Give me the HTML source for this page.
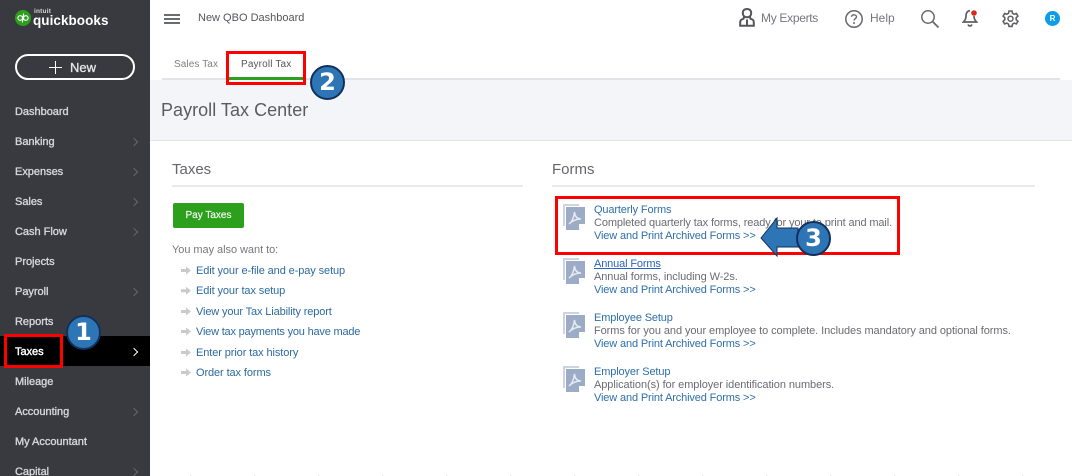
<!DOCTYPE html>
<html><head><meta charset="utf-8"><style>
html,body{margin:0;padding:0;background:#fff}
#p{position:relative;width:1072px;height:476px;overflow:hidden;background:#fff;font-family:"Liberation Sans",sans-serif;font-size:11px;color:#6b6c72}
#p div,#p a,#p svg{position:absolute;white-space:nowrap}
.s{left:15px;color:#d4d7dc;font-size:11px;line-height:14px;letter-spacing:-.02px;-webkit-text-stroke:.35px #d4d7dc}
.c{left:131px;width:5px;height:5px;border-top:1px solid #66676c;border-right:1px solid #66676c;transform:rotate(45deg)}
.l{color:#2d6a9f;font-size:11px;line-height:13px;left:196px;letter-spacing:-.1px}
.t{color:#6b6c72;font-size:11px;line-height:13px;left:594px;letter-spacing:-.075px}
.b{color:#2f6fa8;font-size:11px;line-height:13px;left:594px;letter-spacing:-.14px}
.n{border-radius:50%;background:#2e75b6;border:2px solid #12305c;width:31px;height:31px;color:#fff;font-family:"DejaVu Sans",sans-serif;font-weight:bold;font-size:24px;line-height:31px;text-align:center}
.r{border:3px solid #f00;box-sizing:border-box}
.k{top:475px;width:1px;height:1px;background:#ddd}
</style></head><body><div id="p">
<div style="left:0;top:0;width:150px;height:476px;background:#393a3f"></div>
<svg style="left:15px;top:10px" width="16" height="16" viewBox="0 0 16 16"><circle cx="8" cy="8" r="8" fill="#2ca01c"/><circle cx="5.200" cy="8" r="2.300" fill="none" stroke="#fff" stroke-width="1.100"/><path d="M7.500 5.700V12.500M8.500 3.500V10.300" stroke="#fff" stroke-width="1.100" fill="none"/><circle cx="10.800" cy="8" r="2.300" fill="none" stroke="#fff" stroke-width="1.100"/></svg>
<div style="left:34px;top:8px;color:#d8d8d8;font-size:6.500px;line-height:7px;font-weight:bold;letter-spacing:.2px">intuit</div>
<div style="left:33px;top:13px;color:#fff;font-size:13.500px;line-height:16px;font-weight:bold;letter-spacing:.05px">quickbooks</div>
<div style="left:15px;top:54px;width:120px;height:26px;box-sizing:border-box;border:2px solid #fff;border-radius:13px"></div>
<div style="left:49px;top:67px;width:13px;height:1px;background:#fff"></div>
<div style="left:55px;top:61px;width:1px;height:13px;background:#fff"></div>
<div style="left:70px;top:60px;color:#e8e8e8;font-size:13px;line-height:15px;-webkit-text-stroke:.3px #e8e8e8">New</div>
<div class="s" style="top:105px">Dashboard</div>
<div class="s" style="top:135px">Banking</div><div class="c" style="top:139px"></div>
<div class="s" style="top:165px">Expenses</div><div class="c" style="top:169px"></div>
<div class="s" style="top:195px">Sales</div><div class="c" style="top:199px"></div>
<div class="s" style="top:225px">Cash Flow</div><div class="c" style="top:229px"></div>
<div class="s" style="top:255px">Projects</div>
<div class="s" style="top:285px">Payroll</div><div class="c" style="top:289px"></div>
<div class="s" style="top:315px">Reports</div>
<div style="left:0;top:336px;width:150px;height:30px;background:#000"></div>
<div class="s" style="top:345px;color:#fff;-webkit-text-stroke:.4px #fff">Taxes</div><div class="c" style="top:349px;border-color:#fff"></div>
<div class="s" style="top:375px">Mileage</div>
<div class="s" style="top:405px">Accounting</div><div class="c" style="top:409px"></div>
<div class="s" style="top:435px">My Accountant</div>
<div class="s" style="top:465px">Capital</div><div class="c" style="top:469px"></div>
<div class="r" style="left:4px;top:334px;width:59px;height:34px"></div>
<div class="n" style="left:66px;top:315px">1</div>

<div style="left:164px;top:14px;width:16px;height:2px;background:#6b6c72"></div>
<div style="left:164px;top:18px;width:16px;height:2px;background:#6b6c72"></div>
<div style="left:164px;top:22px;width:16px;height:2px;background:#6b6c72"></div>
<div style="left:198px;top:12px;font-size:11px;line-height:13px;color:#55565b">New QBO Dashboard</div>
<svg style="left:739px;top:7px" width="16" height="20" viewBox="0 0 16 20"><path d="M8 2c-2.800 0-4.200 1.700-4.200 4 0 2.200 1.200 4.200 4.200 4.200s4.200-2 4.200-4.200c0-2.300-1.400-4-4.200-4zM5 10 4.500 11.800C2.500 12.300 1.200 13 1.200 15v3.800h13.600V15c0-2-1.300-2.700-3.300-3.200L11 10M8 12.500v6.300" fill="none" stroke="#56575c" stroke-width="2"/></svg>
<div style="left:761px;top:11px;font-size:12px;line-height:15px;color:#75767b;letter-spacing:-.3px">My Experts</div>
<svg style="left:844px;top:9px" width="20" height="20" viewBox="0 0 20 20"><circle cx="10" cy="10" r="8.200" fill="none" stroke="#68696e" stroke-width="1.500"/><path d="M7.500 7.800C7.700 6.400 8.800 5.800 10 5.800c1.400 0 2.500.9 2.500 2.100 0 1.700-2.500 1.800-2.500 3.600" fill="none" stroke="#68696e" stroke-width="1.400"/><circle cx="10" cy="14" r="1" fill="#68696e"/></svg>
<div style="left:870px;top:11px;font-size:12px;line-height:15px;color:#75767b">Help</div>
<svg style="left:920px;top:9px" width="20" height="20" viewBox="0 0 20 20"><circle cx="8" cy="8" r="6.200" fill="none" stroke="#68696e" stroke-width="1.500"/><path d="M12.500 12.500 18.500 18.500" stroke="#68696e" stroke-width="1.800"/></svg>
<svg style="left:962px;top:8px" width="16" height="20" viewBox="0 0 16 20"><path d="M8 2.500C5 3 4 5.500 4 8c0 3-1 4.500-2.500 6h13C13 12.500 12 11 12 8M6 16.500c.5 1 1 1.500 2 1.500s1.500-.5 2-1.500" fill="none" stroke="#5f6065" stroke-width="1.700"/><circle cx="12" cy="5" r="2.800" fill="#d52b1e"/></svg>
<svg style="left:1002px;top:10px" width="17" height="18" viewBox="0 0 17 18"><path d="M7 1h3l.5 2.300 1.700 1 2.200-.8 1.500 2.600L14.200 7.700v2l1.700 1.600-1.500 2.600-2.200-.8-1.700 1-.5 2.300H7l-.5-2.300-1.700-1-2.200.8-1.500-2.600 1.700-1.600v-2L1.100 6.100l1.500-2.600 2.200.8 1.700-1z" fill="none" stroke="#5f6065" stroke-width="1.600"/><circle cx="8.500" cy="8.700" r="2.500" fill="none" stroke="#5f6065" stroke-width="1.500"/></svg>
<div style="left:1045px;top:11px;width:15px;height:15px;border-radius:50%;background:#0d9ce8;color:#fff;font-size:8px;font-weight:bold;line-height:15px;text-align:center">R</div>

<div style="left:150px;top:80px;width:922px;height:61px;background:#f4f5f8;border-bottom:1px solid #e3e4e7;box-sizing:border-box"></div>
<div style="left:162px;top:78px;width:898px;height:2px;background:#e3e4e7"></div>
<div style="left:174px;top:58px;font-size:10px;line-height:13px;color:#808186;letter-spacing:.1px">Sales Tax</div>
<div style="left:241px;top:58px;font-size:10px;line-height:13px;color:#55565b;letter-spacing:.15px">Payroll Tax</div>
<div style="left:229px;top:77px;width:74px;height:3px;background:#2ca01c"></div>
<div class="r" style="left:226px;top:51px;width:80px;height:34px"></div>
<div class="n" style="left:310px;top:65px">2</div>
<div style="left:161px;top:98px;font-size:18px;line-height:24px;color:#5b5c61;letter-spacing:.03px">Payroll Tax Center</div>

<div style="left:172px;top:161px;font-size:15px;line-height:18px;color:#65666b">Taxes</div>
<div style="left:172px;top:185px;width:351px;height:2px;background:#e9eaec"></div>
<div style="left:173px;top:203px;width:71px;height:25px;background:#2ca01c;border-radius:2px;color:#eef7ec;font-size:10px;line-height:25px;text-align:center;-webkit-text-stroke:.2px #eef7ec">Pay Taxes</div>
<div style="left:172px;top:244px;font-size:11px;line-height:13px;color:#77787c;letter-spacing:-.05px">You may also want to:</div>
<svg style="left:181px;top:266px" width="10" height="112" viewBox="0 0 10 112" fill="#c9cacc"><path d="M0 3h5V0.500L10 4.500 5 8.500V6H0z"/><path d="M0 23.300h5v-2.500l5 4-5 4v-2.500H0zM0 44h5v-2.500l5 4-5 4V47H0zM0 64h5v-2.500l5 4-5 4V67H0zM0 85h5v-2.500l5 4-5 4V88H0zM0 105h5v-2.500l5 4-5 4V108H0z"/></svg>
<div class="l" style="top:265px">Edit your e-file and e-pay setup</div>
<div class="l" style="top:285px">Edit your tax setup</div>
<div class="l" style="top:306px;letter-spacing:-.13px">View your Tax Liability report</div>
<div class="l" style="top:326px;letter-spacing:-.2px">View tax payments you have made</div>
<div class="l" style="top:347px">Enter prior tax history</div>
<div class="l" style="top:367px">Order tax forms</div>

<div style="left:552px;top:161px;font-size:15px;line-height:18px;color:#65666b">Forms</div>
<div style="left:552px;top:185px;width:483px;height:2px;background:#e9eaec"></div>

<svg style="left:563px;top:204px" width="22" height="28" viewBox="0 0 22 28"><path d="M0 0h16v2H2v20H0z" fill="#ccd3e1"/><path d="M3 3h19v17l-6 6H3z" fill="#9dacc6"/><path d="M16 26v-6h6z" fill="#fff"/><path d="M6 20c3-2 5-7 5.500-12 .5 5 3 7 6.500 7-4 0-8 1-12 5z" fill="none" stroke="#e6eaf1" stroke-width="1.500"/></svg>
<svg style="left:563px;top:258px" width="22" height="28" viewBox="0 0 22 28"><path d="M0 0h16v2H2v20H0z" fill="#ccd3e1"/><path d="M3 3h19v17l-6 6H3z" fill="#9dacc6"/><path d="M16 26v-6h6z" fill="#fff"/><path d="M6 20c3-2 5-7 5.500-12 .5 5 3 7 6.500 7-4 0-8 1-12 5z" fill="none" stroke="#e6eaf1" stroke-width="1.500"/></svg>
<svg style="left:563px;top:312px" width="22" height="28" viewBox="0 0 22 28"><path d="M0 0h16v2H2v20H0z" fill="#ccd3e1"/><path d="M3 3h19v17l-6 6H3z" fill="#9dacc6"/><path d="M16 26v-6h6z" fill="#fff"/><path d="M6 20c3-2 5-7 5.500-12 .5 5 3 7 6.500 7-4 0-8 1-12 5z" fill="none" stroke="#e6eaf1" stroke-width="1.500"/></svg>
<svg style="left:563px;top:366px" width="22" height="28" viewBox="0 0 22 28"><path d="M0 0h16v2H2v20H0z" fill="#ccd3e1"/><path d="M3 3h19v17l-6 6H3z" fill="#9dacc6"/><path d="M16 26v-6h6z" fill="#fff"/><path d="M6 20c3-2 5-7 5.500-12 .5 5 3 7 6.500 7-4 0-8 1-12 5z" fill="none" stroke="#e6eaf1" stroke-width="1.500"/></svg>

<div class="b" style="top:204px">Quarterly Forms</div>
<div class="t" style="top:217px;letter-spacing:-.12px">Completed quarterly tax forms, ready for your to print and mail.</div>
<div class="b" style="top:230px">View and Print Archived Forms &gt;&gt;</div>
<div class="b" style="top:258px;color:#2a62c4;text-decoration:underline">Annual Forms</div>
<div class="t" style="top:271px">Annual forms, including W-2s.</div>
<div class="b" style="top:284px">View and Print Archived Forms &gt;&gt;</div>
<div class="b" style="top:312px">Employee Setup</div>
<div class="t" style="top:325px">Forms for you and your employee to complete. Includes mandatory and optional forms.</div>
<div class="b" style="top:338px">View and Print Archived Forms &gt;&gt;</div>
<div class="b" style="top:366px">Employer Setup</div>
<div class="t" style="top:379px">Application(s) for employer identification numbers.</div>
<div class="b" style="top:392px">View and Print Archived Forms &gt;&gt;</div>

<div class="r" style="left:555px;top:196px;width:345px;height:59px"></div>
<svg style="left:760px;top:215px" width="40" height="42" viewBox="0 0 40 42"><path d="M1 23 17 3V13H38V32H17V41z" fill="#2e75b6" stroke="#12305c" stroke-width="1"/></svg>
<div class="n" style="left:796px;top:221px">3</div>

<div class="k" style="left:190px"></div><div class="k" style="left:254px"></div><div class="k" style="left:318px"></div><div class="k" style="left:382px"></div><div class="k" style="left:446px"></div><div class="k" style="left:510px"></div><div class="k" style="left:574px"></div><div class="k" style="left:638px"></div><div class="k" style="left:702px"></div><div class="k" style="left:766px"></div><div class="k" style="left:830px"></div><div class="k" style="left:894px"></div><div class="k" style="left:958px"></div><div class="k" style="left:1022px"></div>
</div></body></html>
